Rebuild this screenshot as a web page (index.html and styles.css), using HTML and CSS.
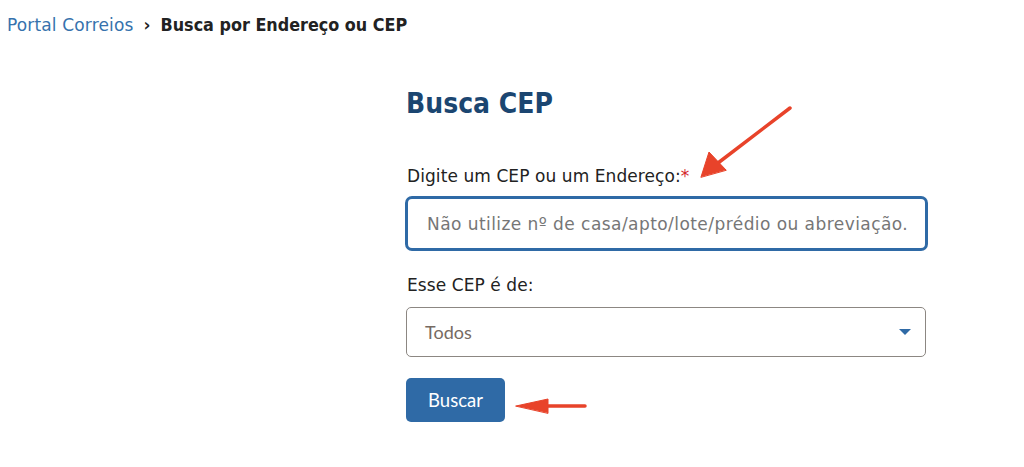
FILE: index.html
```html
<!DOCTYPE html>
<html lang="pt-BR">
<head>
<meta charset="utf-8">
<title>Busca CEP</title>
<link rel="stylesheet" href="styles.css">
</head>
<body>
<nav class="crumbs">
  <a class="crumb-link" href="#">Portal Correios</a>
  <span class="crumb-sep">&#8250;</span>
  <span class="crumb-current">Busca por Endereço ou CEP</span>
</nav>
<main class="page">
  <form class="form">
    <h1 class="title">Busca CEP</h1>
    <label class="label label-first" for="end">Digite um CEP ou um Endereço:<span class="req">*</span></label>
    <input class="input" id="end" type="text" placeholder="Não utilize nº de casa/apto/lote/prédio ou abreviação.">
    <label class="label label-second" for="tipo">Esse CEP é de:</label>
    <div class="select">
      <span class="select-value">Todos</span>
      <svg class="caret" width="12" height="6" viewBox="0 0 12 6"><path d="M0 0H12L6 6Z" fill="#2f6aa6"/></svg>
    </div>
    <div class="actions">
      <button class="btn" type="button">Buscar</button>
    </div>
  </form>
</main>
<svg class="annot" width="1024" height="467" viewBox="0 0 1024 467">
  <g fill="#e8432a" stroke="#e8432a" stroke-linecap="round">
    <line x1="790" y1="108" x2="718" y2="163" stroke-width="3.5"/>
    <polygon points="701,177 709,152 726,170" stroke-width="1" stroke-linejoin="round"/>
    <line x1="585" y1="406" x2="540" y2="406" stroke-width="3.5"/>
    <polygon points="516,406 548,399 548,413" stroke-width="1" stroke-linejoin="round"/>
  </g>
</svg>
</body>
</html>
```
FILE: styles.css
```css
html, body {
  margin: 0;
  padding: 0;
  background: #ffffff;
}
body {
  font-family: "DejaVu Sans", sans-serif;
  color: #222222;
  width: 1024px;
  height: 467px;
  overflow: hidden;
  position: relative;
}
.crumbs {
  display: flex;
  align-items: center;
  gap: 10px;
  padding: 14px 0 0 7px;
  height: 22px;
  font-size: 17px;
  line-height: 22px;
}
.crumb-link {
  color: #3672ad;
  text-decoration: none;
  letter-spacing: 0.15px;
}
.crumb-sep {
  font-weight: bold;
  color: #222;
}
.crumb-current {
  font-family: "DejaVu Sans Condensed", "DejaVu Sans", sans-serif;
  font-weight: bold;
  font-size: 17.8px;
  color: #222;
}
.page {
  display: flex;
  padding-left: 406px;
}
.form {
  display: flex;
  flex-direction: column;
  width: 522px;
  margin: 0;
}
.title {
  margin: 50px 0 0 0;
  font-family: "DejaVu Sans Condensed", "DejaVu Sans", sans-serif;
  font-size: 28px;
  line-height: 36px;
  font-weight: bold;
  color: #1b4671;
}
.label {
  font-size: 17px;
  line-height: 22px;
  color: #222;
  letter-spacing: 0.08px;
}
.label-first {
  margin-top: 43px;
  padding-left: 1px;
}
.req {
  color: #d4282a;
}
.input {
  box-sizing: border-box;
  margin: 9px 0 0 -1px;
  width: 523px;
  height: 55px;
  border: 3px solid #2f6aa6;
  border-radius: 7px;
  padding: 0 0 0 19px;
  font-family: inherit;
  font-size: 17px;
  letter-spacing: 0.44px;
  color: #333;
  outline: none;
}
.input::placeholder {
  color: #767676;
}
.label-second {
  margin-top: 23px;
  padding-left: 1px;
}
.select {
  box-sizing: border-box;
  margin-top: 11px;
  width: 520px;
  height: 50px;
  border: 1px solid #8c8782;
  border-radius: 5px;
  display: flex;
  align-items: center;
  justify-content: space-between;
  padding: 0 14px 0 18px;
}
.select-value {
  font-family: "Lato", sans-serif;
  font-size: 18px;
  color: #766a62;
}
.caret {
  display: block;
}
.actions {
  display: flex;
  margin-top: 21px;
}
.btn {
  width: 99px;
  height: 44px;
  border: none;
  border-radius: 5px;
  background: #2f6aa6;
  color: #ffffff;
  font-family: "Lato", sans-serif;
  font-size: 18.5px;
  padding: 0;
}
.annot {
  position: absolute;
  left: 0;
  top: 0;
  pointer-events: none;
}
```
